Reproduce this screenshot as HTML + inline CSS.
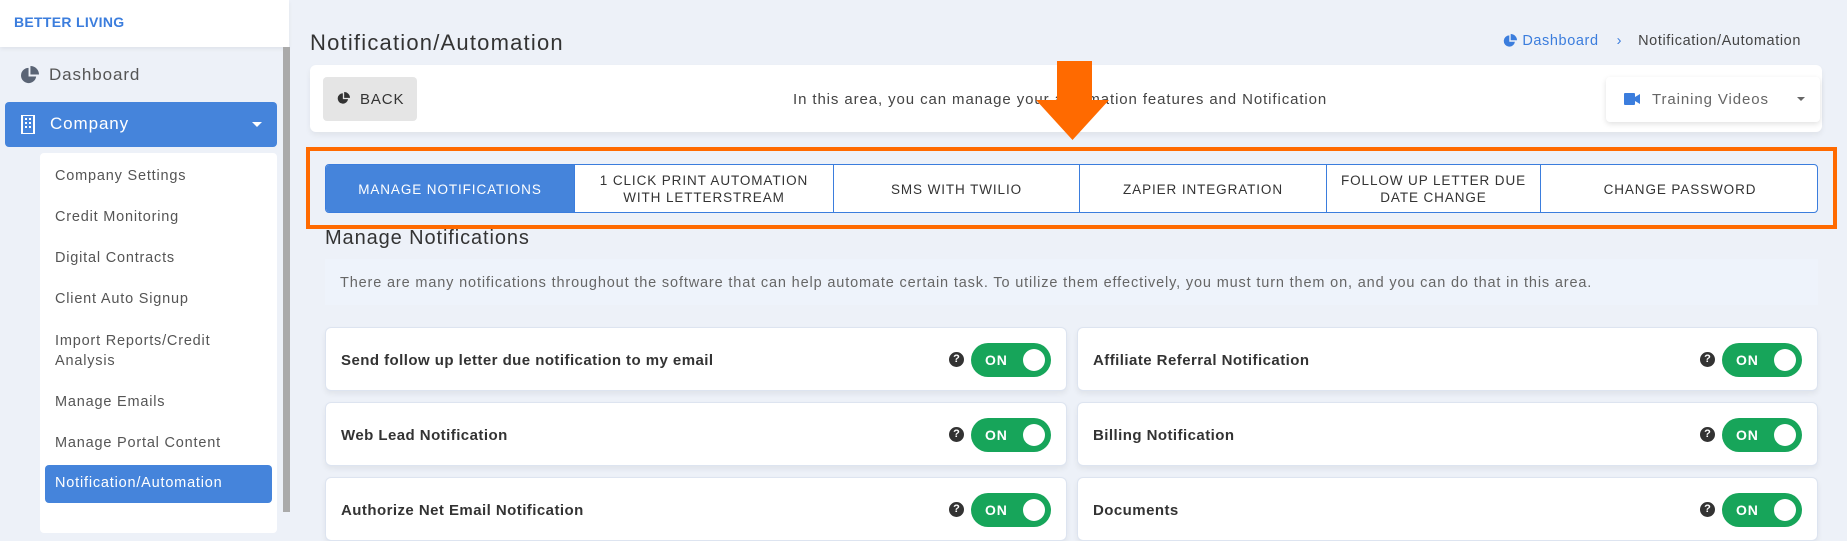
<!DOCTYPE html><html><head><meta charset="utf-8"><style>
*{box-sizing:border-box;margin:0;padding:0}
body{width:1847px;height:512px;overflow:hidden;background:#edf1f8;font-family:"Liberation Sans",sans-serif;position:relative;color:#333;letter-spacing:0.9px}
.a{position:absolute}
.side{left:0;top:0;width:283px;height:512px;background:#edf1f8}
.sb{left:283px;top:47px;width:7px;height:465px;background:#aaa}
.hdr{left:0;top:0;width:289px;height:47px;background:#fff;box-shadow:0 2px 4px rgba(0,0,0,.06)}
.sub{left:40px;top:153px;width:237px;height:380px;background:#fff;border-radius:4px}
.si{position:absolute;left:55px;font-size:14.5px;color:#555;letter-spacing:0.8px}
.card{background:#fff;border:1px solid #dde4f0;border-radius:6px;box-shadow:0 3px 6px rgba(0,0,0,.06)}
.lbl{position:absolute;left:15px;font-size:15px;font-weight:bold;color:#333;letter-spacing:0.45px}
.tg{position:absolute;width:80px;height:34px;border-radius:17px;background:#17a55a;color:#fff;font-weight:bold;font-size:14px}
.tg span{position:absolute;left:14px;top:9px}
.tg i{position:absolute;right:6px;top:6px;width:22px;height:22px;border-radius:50%;background:#fff}
.q{position:absolute;width:15px;height:15px;border-radius:50%;background:#333;color:#fff;font-size:11px;font-weight:bold;text-align:center;line-height:15px;letter-spacing:0}
.tab{position:absolute;top:0;height:48px;display:flex;align-items:center;justify-content:center;text-align:center;font-size:13.5px;color:#333;border-left:1px solid #3b7ddd;line-height:17px;letter-spacing:0.9px}
</style></head><body>
<div class="a side"></div>
<div class="a hdr"></div>
<div class="a" style="left:14px;top:14px;font-size:14px;font-weight:bold;color:#3b7ddd;letter-spacing:0.3px">BETTER LIVING</div>
<div class="a sb"></div>
<svg class="a" style="left:20px;top:66px" width="19" height="19" viewBox="0 0 20 20"><path d="M9 2a8 8 0 1 0 8 9H9z" fill="#5a6475"/><path d="M11 0v9h9a9 9 0 0 0-9-9z" fill="#5a6475"/></svg>
<div class="a" style="left:49px;top:65px;font-size:17px;color:#555">Dashboard</div>
<div class="a" style="left:5px;top:102px;width:272px;height:45px;background:#4584db;border-radius:4px"></div>
<svg class="a" style="left:21px;top:115px" width="14" height="19" viewBox="0 0 14 19"><rect x="1" y="0" width="12" height="19" fill="none" stroke="#fff" stroke-width="2"/><g fill="#fff"><rect x="4" y="3" width="2" height="2"/><rect x="8" y="3" width="2" height="2"/><rect x="4" y="7" width="2" height="2"/><rect x="8" y="7" width="2" height="2"/><rect x="4" y="11" width="2" height="2"/><rect x="8" y="11" width="2" height="2"/></g></svg>
<div class="a" style="left:50px;top:114px;font-size:17px;color:#fff">Company</div>
<div class="a" style="left:252px;top:122px;border:5px solid transparent;border-top-color:#fff"></div>
<div class="a sub"></div>
<div class="si" style="top:168px">Company Settings</div>
<div class="si" style="top:209px">Credit Monitoring</div>
<div class="si" style="top:250px">Digital Contracts</div>
<div class="si" style="top:291px">Client Auto Signup</div>
<div class="si" style="top:331px;line-height:20px">Import Reports/Credit<br>Analysis</div>
<div class="si" style="top:394px">Manage Emails</div>
<div class="si" style="top:435px">Manage Portal Content</div>
<div class="a" style="left:45px;top:465px;width:227px;height:38px;background:#4584db;border-radius:4px"></div>
<div class="si" style="top:475px;color:#fff">Notification/Automation</div>

<div class="a" style="left:310px;top:30px;font-size:22px;color:#333;letter-spacing:1.2px">Notification/Automation</div>
<div class="a" style="right:46px;top:33px;display:flex;align-items:center;font-size:14.5px;letter-spacing:0.6px">
<svg width="14" height="14" viewBox="0 0 20 20" style="margin-right:5px"><path d="M9 2a8 8 0 1 0 8 9H9z" fill="#3b7ddd"/><path d="M11 0v9h9a9 9 0 0 0-9-9z" fill="#3b7ddd"/></svg>
<span style="color:#3b7ddd">Dashboard</span><span style="color:#3b7ddd;margin:0 16px 0 18px">›</span><span style="color:#444">Notification/Automation</span></div>

<div class="a card" style="left:310px;top:65px;width:1512px;height:67px;border:none"></div>
<div class="a" style="left:323px;top:77px;width:94px;height:44px;background:#e5e5e5;border-radius:4px"></div>
<svg class="a" style="left:337px;top:92px" width="13" height="13" viewBox="0 0 20 20"><path d="M9 2a8 8 0 1 0 8 9H9z" fill="#333"/><path d="M11 0v9h9a9 9 0 0 0-9-9z" fill="#333"/></svg>
<div class="a" style="left:360px;top:91px;font-size:15px;color:#333">BACK</div>
<div class="a" style="left:793px;top:91px;font-size:15px;color:#444;white-space:pre">In this area, you can manage your automation features and Notification</div>
<div class="a" style="left:1606px;top:77px;width:214px;height:45px;background:#fff;border-radius:4px;box-shadow:0 2px 6px rgba(0,0,0,.12)"></div>
<svg class="a" style="left:1624px;top:93px" width="16" height="12" viewBox="0 0 16 12"><rect width="11" height="12" rx="1" fill="#3b7ddd"/><path d="M11 4l5-3v10l-5-3z" fill="#3b7ddd"/></svg>
<div class="a" style="left:1652px;top:91px;font-size:15px;color:#666">Training Videos</div>
<div class="a" style="left:1797px;top:97px;border:4px solid transparent;border-top-color:#666"></div>

<div class="a" style="left:1057px;top:61px;width:35px;height:42px;background:#ff6a00"></div>
<svg class="a" style="left:1036px;top:100px" width="73" height="40" viewBox="0 0 73 40"><path d="M0 0H73L36.5 40z" fill="#ff6a00"/></svg>

<div class="a" style="left:306px;top:147px;width:1531px;height:82px;border:4px solid #ff6a00"></div>
<div class="a" style="left:325px;top:164px;width:1493px;height:49px;border:1px solid #3b7ddd;border-radius:4px;background:#fff;overflow:hidden">
<div class="tab" style="left:0;width:248px;background:#4584db;color:#fff;border-left:none">MANAGE NOTIFICATIONS</div>
<div class="tab" style="left:248px;width:259px">1 CLICK PRINT AUTOMATION<br>WITH LETTERSTREAM</div>
<div class="tab" style="left:507px;width:246px">SMS WITH TWILIO</div>
<div class="tab" style="left:753px;width:247px">ZAPIER INTEGRATION</div>
<div class="tab" style="left:1000px;width:214px">FOLLOW UP LETTER DUE<br>DATE CHANGE</div>
<div class="tab" style="left:1214px;width:279px">CHANGE PASSWORD</div>
</div>
<div class="a" style="left:325px;top:227px;font-size:20px;color:#333;letter-spacing:0.9px">Manage Notifications</div>
<div class="a" style="left:325px;top:259px;width:1493px;height:46px;background:#eef3fb"></div>
<div class="a" style="left:340px;top:275px;font-size:14.5px;color:#666;letter-spacing:0.85px;white-space:nowrap">There are many notifications throughout the software that can help automate certain task. To utilize them effectively, you must turn them on, and you can do that in this area.</div>

<div class="a card" style="left:325px;top:327px;width:742px;height:64px"><div class="lbl" style="top:24px">Send follow up letter due notification to my email</div><div class="q" style="left:623px;top:24px">?</div><div class="tg" style="left:645px;top:15px"><span>ON</span><i></i></div></div>
<div class="a card" style="left:1077px;top:327px;width:741px;height:64px"><div class="lbl" style="top:24px">Affiliate Referral Notification</div><div class="q" style="left:622px;top:24px">?</div><div class="tg" style="left:644px;top:15px"><span>ON</span><i></i></div></div>
<div class="a card" style="left:325px;top:402px;width:742px;height:64px"><div class="lbl" style="top:24px">Web Lead Notification</div><div class="q" style="left:623px;top:24px">?</div><div class="tg" style="left:645px;top:15px"><span>ON</span><i></i></div></div>
<div class="a card" style="left:1077px;top:402px;width:741px;height:64px"><div class="lbl" style="top:24px">Billing Notification</div><div class="q" style="left:622px;top:24px">?</div><div class="tg" style="left:644px;top:15px"><span>ON</span><i></i></div></div>
<div class="a card" style="left:325px;top:477px;width:742px;height:64px"><div class="lbl" style="top:24px">Authorize Net Email Notification</div><div class="q" style="left:623px;top:24px">?</div><div class="tg" style="left:645px;top:15px"><span>ON</span><i></i></div></div>
<div class="a card" style="left:1077px;top:477px;width:741px;height:64px"><div class="lbl" style="top:24px">Documents</div><div class="q" style="left:622px;top:24px">?</div><div class="tg" style="left:644px;top:15px"><span>ON</span><i></i></div></div>
</body></html>
